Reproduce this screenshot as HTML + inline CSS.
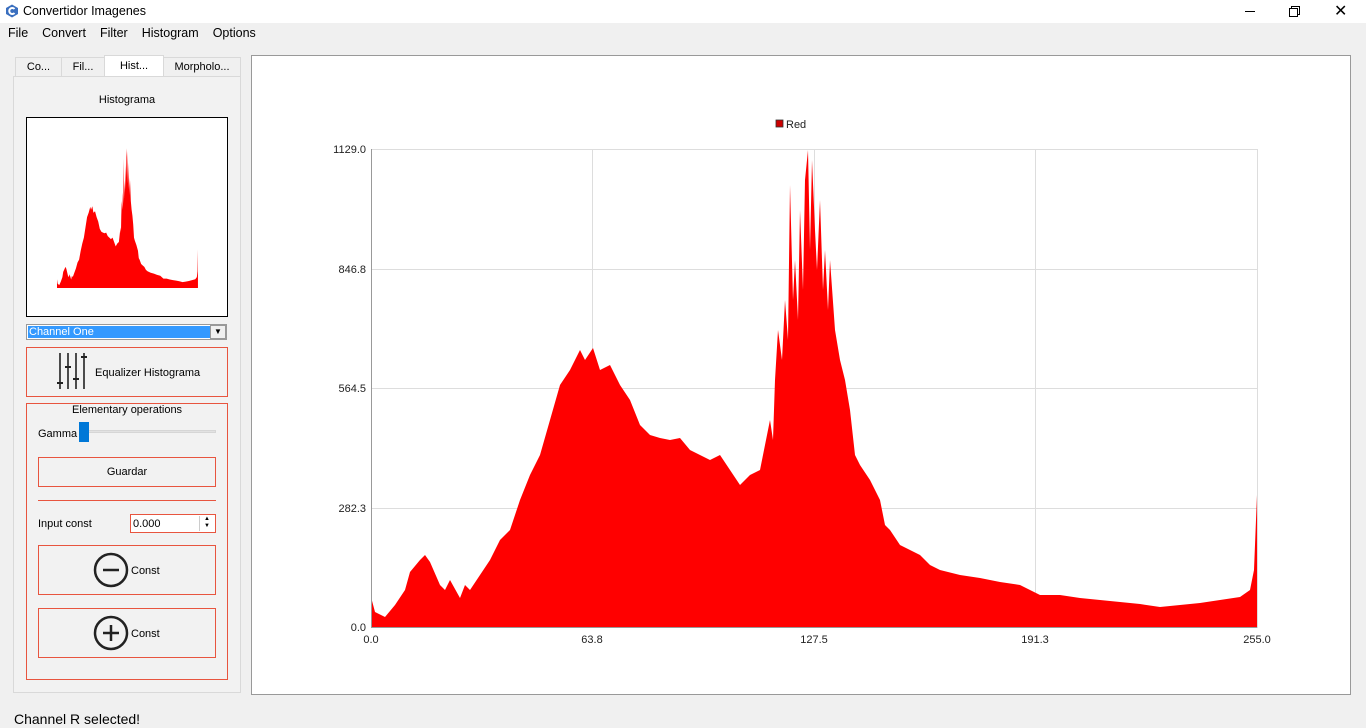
<!DOCTYPE html>
<html><head><meta charset="utf-8"><style>
*{margin:0;padding:0;box-sizing:border-box}
body{width:1366px;height:728px;background:#f0f0f0;font-family:"Liberation Sans",sans-serif;font-size:12px;color:#000;position:relative;overflow:hidden}
.a{position:absolute}
.title{left:0;top:0;width:1366px;height:23px;background:#fff}
.menu span{margin-right:14px;font-size:12.5px}
.rb{border:1px solid #e8553f}
.t{font-size:11px}
</style></head><body>
<div class="a title">
 <svg class="a" style="left:5px;top:4px" width="14" height="14"><path d="M7 0.5 L13 4 L13 10 L7 13.5 L1 10 L1 4Z" fill="#3a6fbf"/><path d="M9.5 5 A3 3 0 1 0 9.5 9" stroke="#fff" stroke-width="2" fill="none"/></svg>
 <div class="a" style="left:23px;top:4px;font-size:12.5px">Convertidor Imagenes</div>
 <div class="a" style="left:1245px;top:11px;width:10px;height:1px;background:#000"></div>
 <div class="a" style="left:1291px;top:6px;width:9px;height:9px;border:1px solid #000;background:#fff"></div>
 <div class="a" style="left:1289px;top:8px;width:9px;height:9px;border:1px solid #000;background:#fff"></div>
 <div class="a" style="left:1334px;top:1px;font-size:16px">✕</div>
</div>
<div class="a menu" style="left:8px;top:26px"><span>File</span><span>Convert</span><span>Filter</span><span>Histogram</span><span>Options</span></div>
<!-- tabs -->
<div class="a" style="left:15px;top:57px;width:47px;height:20px;border:1px solid #d9d9d9;border-bottom:none;font-size:11px;text-align:center;line-height:19px">Co...</div>
<div class="a" style="left:61px;top:57px;width:44px;height:20px;border:1px solid #d9d9d9;border-bottom:none;font-size:11px;text-align:center;line-height:19px">Fil...</div>
<div class="a" style="left:104px;top:55px;width:60px;height:22px;border:1px solid #d9d9d9;border-bottom:none;background:#fff;font-size:11px;text-align:center;line-height:20px">Hist...</div>
<div class="a" style="left:163px;top:57px;width:78px;height:20px;border:1px solid #d9d9d9;border-bottom:none;font-size:11px;text-align:center;line-height:19px">Morpholo...</div>
<div class="a" style="left:13px;top:76px;width:228px;height:617px;border:1px solid #d9d9d9;background:#f2f2f2"></div>
<div class="a t" style="left:27px;top:94px;width:200px;text-align:center">Histograma</div>
<div class="a" style="left:26px;top:117px;width:202px;height:200px;border:1px solid #000;background:#fff"></div>
<!-- combo -->
<div class="a" style="left:26px;top:324px;width:201px;height:16px;border:1px solid #999;background:#fff"></div>
<div class="a" style="left:28px;top:326px;width:182px;height:12px;background:#3399ff;color:#fff;font-size:11px;line-height:12px;padding-left:1px">Channel One</div>
<div class="a" style="left:210px;top:325px;width:16px;height:14px;background:#f0f0f0;border:1px solid #999;font-size:8px;text-align:center;line-height:12px">▼</div>
<!-- equalizer -->
<div class="a rb" style="left:26px;top:347px;width:202px;height:50px"></div>
<svg class="a" style="left:56px;top:353px" width="36" height="36" stroke="#222" stroke-width="2"><path d="M4 0V36M12 0V36M20 0V36M28 0V36" stroke-width="1.6"/><path d="M1 30H7M9 14H15M17 26H23M25 4H31"/></svg>
<div class="a t" style="left:95px;top:367px">Equalizer Histograma</div>
<!-- group -->
<div class="a rb" style="left:26px;top:403px;width:202px;height:277px"></div>
<div class="a t" style="left:68px;top:404px;background:#f2f2f2;padding:0 4px">Elementary operations</div>
<div class="a t" style="left:38px;top:428px">Gamma</div>
<div class="a" style="left:85px;top:430px;width:131px;height:3px;background:#e2e2e2;border:1px solid #d6d6d6"></div>
<div class="a" style="left:79px;top:422px;width:10px;height:20px;background:#0078d7"></div>
<div class="a rb" style="left:38px;top:457px;width:178px;height:30px"></div>
<div class="a t" style="left:38px;top:466px;width:178px;text-align:center">Guardar</div>
<div class="a" style="left:38px;top:500px;width:178px;height:1px;background:#e8553f"></div>
<div class="a t" style="left:38px;top:518px">Input const</div>
<div class="a rb" style="left:130px;top:514px;width:86px;height:19px;background:#fff"></div>
<div class="a t" style="left:133px;top:518px">0.000</div>
<div class="a" style="left:199px;top:516px;width:15px;height:15px;border-left:1px solid #ccc;font-size:6px;line-height:7px;text-align:center">▲<br>▼</div>
<div class="a rb" style="left:38px;top:545px;width:178px;height:50px"></div>
<svg class="a" style="left:93px;top:552px" width="36" height="36"><circle cx="18" cy="18" r="16" fill="none" stroke="#222" stroke-width="2.5"/><path d="M10 18H26" stroke="#222" stroke-width="2.5"/></svg>
<div class="a t" style="left:131px;top:565px">Const</div>
<div class="a rb" style="left:38px;top:608px;width:178px;height:50px"></div>
<svg class="a" style="left:93px;top:615px" width="36" height="36"><circle cx="18" cy="18" r="16" fill="none" stroke="#222" stroke-width="2.5"/><path d="M10 18H26M18 10V26" stroke="#222" stroke-width="2.5"/></svg>
<div class="a t" style="left:131px;top:628px">Const</div>
<div class="a" style="left:14px;top:711px;font-size:14px">Channel R selected!</div>
<!-- chart -->
<div class="a" style="left:251px;top:55px;width:1100px;height:640px;border:1px solid #999;background:#fff"></div>
<svg class="a" style="left:0;top:0" width="1366" height="728">
<defs><polygon id="h" fill="#f00" points="371,627 371,597 375,612 385,617 395,605 405,590 410,572 420,560 425,555 430,562 440,585 445,590 450,580 460,598 465,585 470,590 480,575 490,560 500,540 510,530 520,500 530,475 540,455 550,420 560,385 570,370 580,350 585,360 593,348 600,370 610,365 620,385 630,400 640,425 650,435 660,438 670,440 680,438 690,450 700,455 710,460 720,455 730,470 740,485 750,475 760,470 770,420 773,440 775,380 778,330 782,360 785,300 788,340 790,185 793,300 795,260 798,320 800,210 803,290 805,180 808,150 810,250 812,160 815,230 817,270 820,200 823,290 825,250 828,310 830,260 835,330 840,360 845,380 850,410 855,455 860,465 870,480 880,500 885,525 890,530 900,545 910,550 920,555 930,565 940,570 960,575 980,578 1000,582 1020,585 1040,595 1060,595 1080,598 1100,600 1120,602 1140,604 1160,607 1180,605 1200,603 1220,600 1240,597 1250,590 1254,570 1257,495 1257,627"/></defs>
<g stroke="#ddd" stroke-width="1" fill="none">
<rect x="371.5" y="149.5" width="886" height="478"/>
<path d="M371 269.5H1257M371 388.5H1257M371 508.5H1257M592.5 149V627M814.5 149V627M1035.5 149V627"/>
</g>
<use href="#h"/>
<path d="M371 627.5H1257M371.5 149V627" stroke="#999"/>
<g font-family="Liberation Sans" font-size="11" fill="#222" text-anchor="end">
<text x="366" y="153">1129.0</text><text x="366" y="273">846.8</text><text x="366" y="392">564.5</text><text x="366" y="512">282.3</text><text x="366" y="631">0.0</text>
</g>
<g font-family="Liberation Sans" font-size="11" fill="#222" text-anchor="middle">
<text x="371" y="643">0.0</text><text x="592" y="643">63.8</text><text x="814" y="643">127.5</text><text x="1035" y="643">191.3</text><text x="1257" y="643">255.0</text>
</g>
<rect x="776" y="120" width="7" height="7" fill="#c00" stroke="#333" stroke-width="0.8"/>
<text x="786" y="128" font-family="Liberation Sans" font-size="11" fill="#222">Red</text>
<use href="#h" transform="translate(-2.03,104.3) scale(0.1591,0.293)"/>
</svg>
</body></html>
